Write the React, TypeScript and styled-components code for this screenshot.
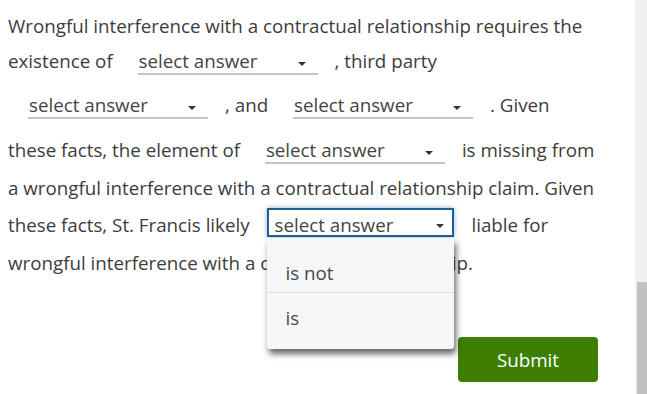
import React from 'react';
import styled, { createGlobalStyle } from 'styled-components';

const Global = createGlobalStyle`
  html, body { margin: 0; padding: 0; background: #ffffff; overflow: hidden; }
  body { font-family: "Open Sans", "Liberation Sans", sans-serif; }
`;

const Page = styled.div`
  display: flex;
  width: 647px;
  height: 394px;
  overflow: hidden;
`;

const Content = styled.main`
  flex: 1;
  display: flex;
  flex-direction: column;
  padding: 13px 0 0 8px;
  color: #3c3c3c;
  font-size: 18.75px;
`;

const Paragraph = styled.div`
  display: flex;
  flex-direction: column;
`;

const Line = styled.div<{ $h: number }>`
  display: flex;
  align-items: baseline;
  height: ${(p) => p.$h}px;
  white-space: pre;
`;

const Text = styled.span`
  line-height: normal;
`;

const SelectBox = styled.div`
  display: flex;
  align-items: baseline;
  justify-content: space-between;
  width: 180px;
  box-sizing: border-box;
  margin: 0 17px 0 20px;
  line-height: 24px;
  border-bottom: 2px solid #c4c4c4;
  color: #444444;
`;

const SelectLabel = styled.span`
  padding-left: 1px;
`;

const Arrow = styled.span<{ $top: number; $right: number }>`
  align-self: flex-start;
  width: 0;
  height: 0;
  margin-top: ${(p) => p.$top}px;
  margin-right: ${(p) => p.$right}px;
  border-left: 4px solid transparent;
  border-right: 4px solid transparent;
  border-top: 4px solid #333333;
`;

const FocusedSelect = styled.div`
  position: relative;
  display: flex;
  align-items: baseline;
  justify-content: space-between;
  width: 187px;
  height: 29px;
  box-sizing: border-box;
  margin: -5px 17px 0 13px;
  padding: 4px 0 0 5px;
  line-height: 22px;
  border: 2px solid #1d5f8f;
  box-shadow: 0 0 5px rgba(40, 110, 170, 0.55);
  color: #444444;
  background: #ffffff;
`;

const Menu = styled.ul`
  position: absolute;
  left: -2px;
  top: calc(100% + 3px);
  width: 187px;
  box-sizing: border-box;
  margin: 0;
  padding: 10px 0 11px;
  list-style: none;
  background: #f6f6f6;
  border-radius: 0 0 3px 3px;
  box-shadow: 2px 5px 6px rgba(0, 0, 0, 0.6);
  z-index: 5;
`;

const MenuItem = styled.li<{ $divider?: boolean }>`
  height: 45px;
  box-sizing: border-box;
  padding: 12px 18px 0;
  line-height: 25px;
  color: #434a52;
  border-bottom: ${(p) => (p.$divider ? '1px solid #e0e0e0' : 'none')};
`;

const Footer = styled.div`
  display: flex;
  justify-content: flex-end;
  margin-top: 57px;
  padding-right: 37px;
`;

const SubmitButton = styled.button`
  width: 140px;
  height: 45px;
  border: none;
  border-radius: 4px;
  background: #3d7f00;
  color: #ffffff;
  font-family: "Open Sans", "Liberation Sans", sans-serif;
  font-size: 18.75px;
  cursor: pointer;
`;

const ScrollTrack = styled.div`
  width: 12px;
  height: 100%;
  display: flex;
  flex-direction: column;
  justify-content: flex-end;
  background: #f0f0f0;
`;

const ScrollThumb = styled.div`
  width: 10px;
  height: 112px;
  margin-left: 2px;
  background: #c1c1c1;
`;

const Select: React.FC = () => (
  <SelectBox>
    <SelectLabel>select answer</SelectLabel>
    <Arrow $top={13} $right={12} />
  </SelectBox>
);

export default function App() {
  return (
    <Page>
      <Global />
      <Content>
        <Paragraph>
          <Line $h={35}>
            <Text>Wrongful interference with a contractual relationship requires the</Text>
          </Line>
          <Line $h={44}>
            <Text>existence of </Text>
            <Select />
            <Text>, third party</Text>
          </Line>
          <Line $h={45}>
            <Select />
            <Text>, and </Text>
            <Select />
            <Text>. Given</Text>
          </Line>
          <Line $h={38}>
            <Text>these facts, the element of </Text>
            <Select />
            <Text>is missing from</Text>
          </Line>
          <Line $h={37}>
            <Text>a wrongful interference with a contractual relationship claim. Given</Text>
          </Line>
          <Line $h={38}>
            <Text>these facts, St. Francis likely </Text>
            <FocusedSelect>
              <span>select answer</span>
              <Arrow $top={10} $right={8} />
              <Menu>
                <MenuItem $divider>is not</MenuItem>
                <MenuItem>is</MenuItem>
              </Menu>
            </FocusedSelect>
            <Text>liable for</Text>
          </Line>
          <Line $h={30}>
            <Text>wrongful interference with a contractual relationship.</Text>
          </Line>
        </Paragraph>
        <Footer>
          <SubmitButton>Submit</SubmitButton>
        </Footer>
      </Content>
      <ScrollTrack>
        <ScrollThumb />
      </ScrollTrack>
    </Page>
  );
}
